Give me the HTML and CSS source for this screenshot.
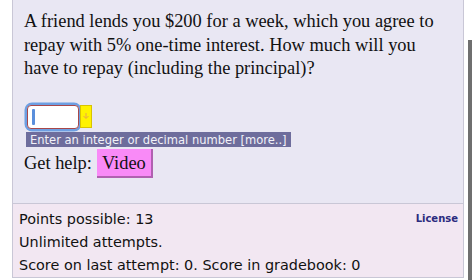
FILE: index.html
```html
<!DOCTYPE html>
<html>
<head>
<meta charset="utf-8">
<link rel="stylesheet" href="styles.css">
</head>
<body>
<div class="page">
  <div class="card">
    <div class="question">
      <p class="prompt">A friend lends you $200 for a week, which you agree to repay with 5% one-time interest. How much will you have to repay (including the principal)?</p>
      <div class="answer">
        <div class="field-row">
          <div class="glow"><div class="input"><span class="caret"></span></div></div>
          <div class="preview"><svg width="8" height="8" viewBox="0 0 8 8"><path d="M4 1 V6 M1.5 4 L4 6.5 L6.5 4" stroke="#e8a64a" stroke-width="1" fill="none"/></svg></div>
        </div>
        <div class="hint">Enter an integer or decimal number [more..]</div>
      </div>
      <div class="help">
        <span class="help-label">Get help:</span>
        <span class="video-btn">Video</span>
      </div>
    </div>
    <div class="footer">
      <div class="stats">
        <div>Points possible: 13</div>
        <div>Unlimited attempts.</div>
        <div>Score on last attempt: 0. Score in gradebook: 0</div>
      </div>
      <a class="license">License</a>
    </div>
  </div>
  <div class="scrollbar"></div>
</div>
</body>
</html>
```
FILE: styles.css
```css
html, body {
  margin: 0;
  padding: 0;
  background: #ffffff;
}
.page {
  position: relative;
  width: 474px;
  height: 280px;
  overflow: hidden;
}
.card {
  margin-left: 12px;
  width: 450px;
  border-left: 1px solid #c9c7d6;
  border-right: 1px solid #c9c7d6;
  border-bottom: 1px solid #c9c7d6;
}
.question {
  background: #e9e7f3;
  padding: 10px 12px 0 11px;
  height: 203px;
  box-sizing: border-box;
}
.prompt {
  margin: 0;
  max-width: 420px;
  font-family: "Liberation Serif", "Times New Roman", serif;
  font-size: 18.4px;
  line-height: 23.5px;
  color: #111;
}
.answer {
  margin-top: 21px;
  margin-left: 0px;
}
.field-row {
  display: flex;
  align-items: center;
}
.glow {
  margin: 3px 0 0 3px;
  border-radius: 5px;
  box-shadow: 0 0 0 2.5px #6d9fe2;
}
.input {
  width: 46px;
  height: 22px;
  border: 1.5px solid #a8484a;
  border-radius: 4px;
  background: #ffffff;
  display: flex;
  align-items: center;
  padding-left: 4px;
  box-sizing: content-box;
}
.caret {
  width: 3px;
  height: 16px;
  background: #5a8fdc;
  border-radius: 1px;
}
.preview {
  width: 12px;
  height: 23px;
  background: #fff200;
  border: 1px solid #d8c400;
  box-sizing: border-box;
  display: flex;
  align-items: center;
  justify-content: center;
  margin-left: 1px;
  margin-top: 2px;
}
.hint {
  display: inline-block;
  margin-top: 3px;
  margin-left: 2px;
  background: #6e6d9c;
  color: #f2f2f8;
  font-family: "DejaVu Sans Condensed", "DejaVu Sans", sans-serif;
  font-stretch: condensed;
  font-size: 12.8px;
  line-height: 15px;
  padding: 0 4px;
}
.help {
  display: flex;
  align-items: center;
  gap: 5px;
  font-family: "Liberation Serif", "Times New Roman", serif;
  font-size: 18.4px;
  color: #111;
  margin-top: 1px;
}
.video-btn {
  background: #f98af7;
  padding: 3px 5px 2px 5px;
  border-right: 2px solid #b061b0;
  border-bottom: 2px solid #b061b0;
  line-height: 22px;
}
.footer {
  border-top: 1px solid #c9c7d6;
  background: #f2e7f2;
  display: flex;
  justify-content: space-between;
  padding: 4px 5px 4px 6px;
  height: 74px;
  box-sizing: border-box;
}
.stats {
  font-family: "DejaVu Sans", Verdana, sans-serif;
  font-size: 14.4px;
  line-height: 23px;
  color: #111;
}
.license {
  font-family: "DejaVu Sans", Verdana, sans-serif;
  font-size: 10px;
  color: #2b2b7e;
  font-weight: bold;
  margin-top: 5px;
}
.scrollbar {
  position: absolute;
  left: 468px;
  top: 40px;
  width: 4px;
  height: 240px;
  background: #6f6f6f;
}
```
